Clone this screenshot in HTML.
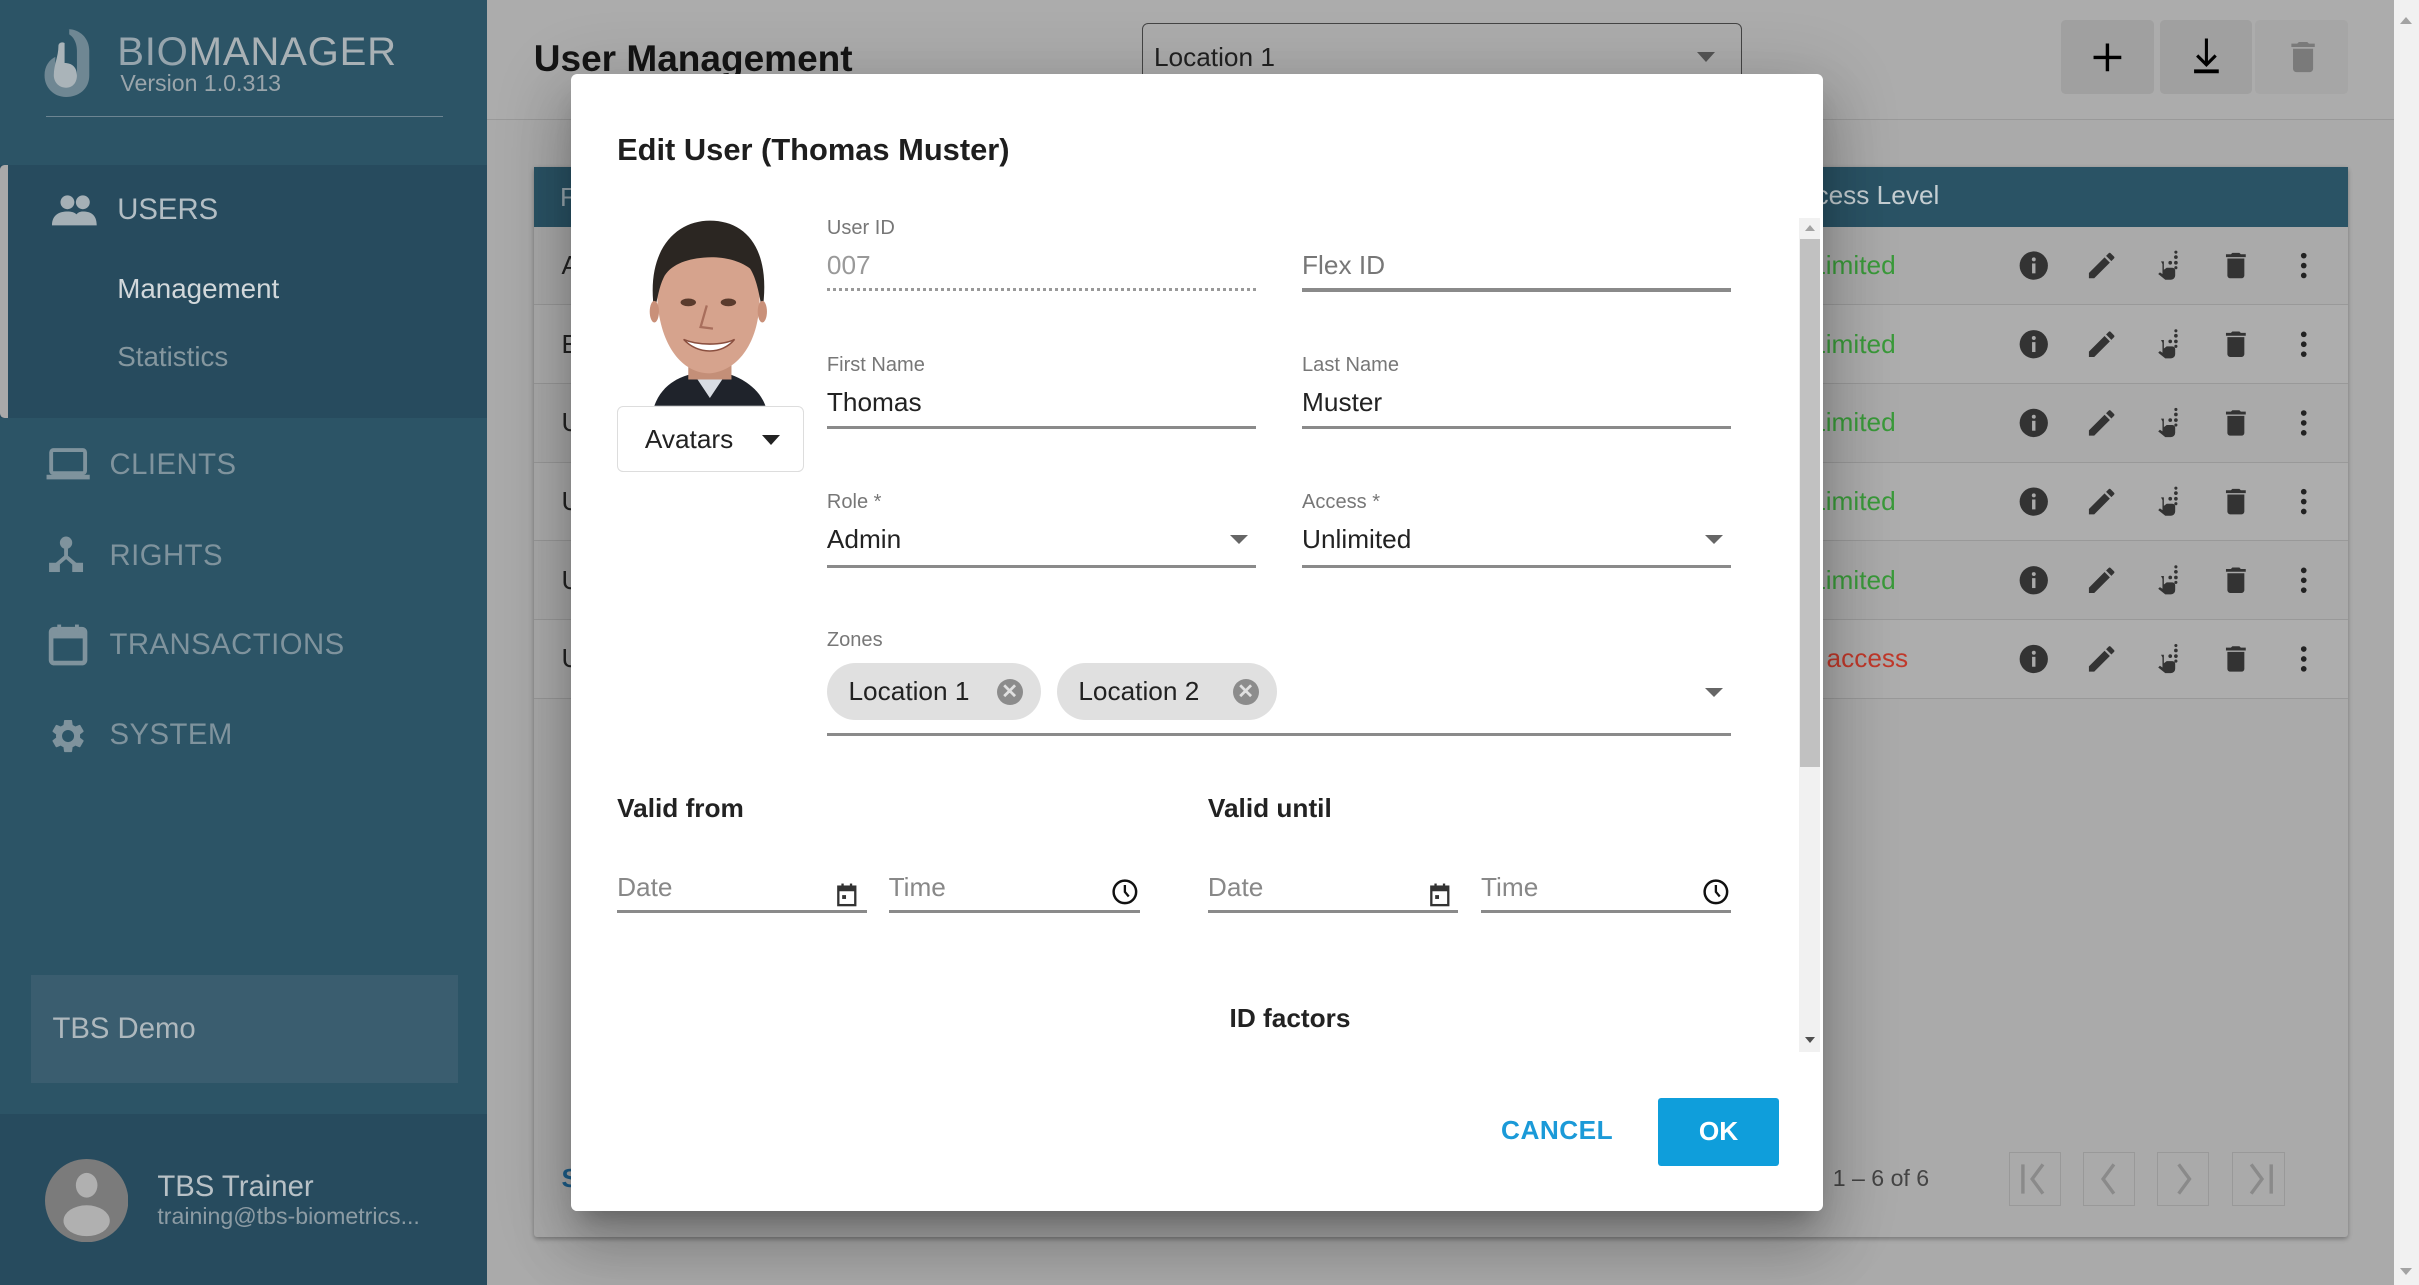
<!DOCTYPE html>
<html><head><meta charset="utf-8">
<style>
*{margin:0;padding:0;box-sizing:border-box}
html,body{width:2419px;height:1285px;overflow:hidden;background:#aaa}
#r{zoom:1.5427;width:1568px;height:833px;position:relative;font-family:"Liberation Sans",sans-serif;overflow:hidden;background:#aaaaaa}
.a{position:absolute;white-space:nowrap}
.t{position:absolute;white-space:nowrap;height:24px;line-height:24px}
.side{left:0;top:0;width:316px;height:833px;background:#2c5466}
.nav{color:#7f939d;font-size:19px;letter-spacing:.3px}
.row{position:absolute;left:346px;width:1176px;height:51px;border-bottom:1px solid #999}
.lab{font-size:13px;color:#777}
.val{font-size:17px;color:#222}
.ln{position:absolute;height:2px;background:#8a8a8a}
.chip{position:absolute;top:430px;height:37px;border-radius:19px;background:#e0e0e0;font-size:17px;color:#222;line-height:37px;padding-left:14px}
.x{position:absolute;top:10px;width:17px;height:17px;border-radius:50%;background:#8c8c8c;color:#e0e0e0;font-size:13px;line-height:17px;text-align:center;font-weight:bold}
.pg{position:absolute;top:747px;width:34px;height:35px;border:1px solid #999}
</style></head><body><div id="r">
<svg width="0" height="0" style="position:absolute">
<defs>
<symbol id="info" viewBox="0 0 24 24"><circle cx="12" cy="12" r="10" fill="#333"/><rect x="10.8" y="10.5" width="2.4" height="7" fill="#aaa"/><circle cx="12" cy="7.6" r="1.4" fill="#aaa"/></symbol>
<symbol id="pen" viewBox="0 0 24 24"><path d="M3 17.25V21h3.75L17.81 9.94l-3.75-3.75L3 17.25zM20.71 7.04a1 1 0 000-1.41l-2.34-2.34a1 1 0 00-1.41 0l-1.83 1.83 3.75 3.75 1.83-1.830z" fill="#333"/></symbol>
<symbol id="hand" viewBox="0 0 24 24"><path d="M7 9h2v6l2-1.5h4a2 2 0 012 2V19a3 3 0 01-3 3H10l-5-4 1.2-1.2L8 18V11z" fill="#333" transform="translate(-1 0)"/><circle cx="12.5" cy="10" r="1.3" fill="#333"/><circle cx="16.5" cy="10" r="1.3" fill="#333"/><circle cx="16.5" cy="6" r="1.3" fill="#333"/><circle cx="16.5" cy="2.5" r="1.1" fill="#333"/><circle cx="16.5" cy="13.5" r="1.1" fill="#333"/></symbol>
<symbol id="trash" viewBox="0 0 24 24"><path d="M6 19a2 2 0 002 2h8a2 2 0 002-2V7H6v12zM19 4h-3.5l-1-1h-5l-1 1H5v2h14V4z" fill="#333"/></symbol>
<symbol id="dots" viewBox="0 0 24 24"><circle cx="12" cy="5" r="2" fill="#222"/><circle cx="12" cy="12" r="2" fill="#222"/><circle cx="12" cy="19" r="2" fill="#222"/></symbol>
</defs></svg>

<!-- SIDEBAR -->
<div class="a side"></div>
<svg class="a" style="left:28px;top:17px" width="32" height="48" viewBox="0 0 32 48">
<path d="M16 2 C24 2 30 8 30 16 V32 C30 41 23 46 15 46 C7 46 1 40 1 32 C1 26 4 22 8 20 V30 C8 35 11 38 15 38 C19 38 22 35 22 30 V16 C22 10 19 6 16 5 Z" fill="#6f8793"/>
<path d="M10 13 C10 11 12 10 14 11 V24 C19 24 22 27 22 32 C22 37 19 40 15 40 C10 40 7 36 7 32 C7 25 10 20 10 13Z" fill="#aab4b9"/>
<path d="M16 2 V24" stroke="#2c5466" stroke-width="2"/>
</svg>
<div class="t" style="left:76px;top:19px;font-size:26px;height:30px;line-height:30px;letter-spacing:.5px"><span style="color:#96a5ad">BIO</span><span style="color:#a9b1b5">MANAGER</span></div>
<div class="t" style="left:78px;top:44px;font-size:15px;color:#9aa5ab;height:20px;line-height:20px">Version 1.0.313</div>
<div class="a" style="left:30px;top:75px;width:257px;height:1px;background:#6d8592"></div>
<div class="a" style="left:0;top:107px;width:316px;height:164px;background:#274b5e"></div>
<div class="a" style="left:0;top:107px;width:5px;height:164px;background:#a9a9a9;border-radius:3px 0 0 3px"></div>
<svg class="a" style="left:34px;top:125px" width="30" height="22" viewBox="0 0 30 22"><circle cx="10" cy="6" r="4.5" fill="#a5b0b6"/><circle cx="20" cy="6" r="4.5" fill="#a5b0b6"/><path d="M0 21 C0 14 5 12 10 12 C15 12 18 14 18 21Z M14 21 C14 14 17 12 20 12 C25 12 29 14 29 21Z" fill="#a5b0b6"/></svg>
<div class="t" style="left:76px;top:124px;font-size:19px;color:#b3bec4">USERS</div>
<div class="t" style="left:76px;top:175px;font-size:18px;color:#d2d8db">Management</div>
<div class="t" style="left:76px;top:219px;font-size:18px;color:#85979f">Statistics</div>
<svg class="a" style="left:29px;top:290px" width="30" height="22" viewBox="0 0 30 22"><rect x="4" y="2" width="22" height="15" rx="1.5" fill="none" stroke="#7f939d" stroke-width="2.5"/><rect x="1" y="18" width="28" height="3" fill="#7f939d"/></svg>
<div class="t nav" style="left:71px;top:289px">CLIENTS</div>
<svg class="a" style="left:30px;top:347px" width="26" height="26" viewBox="0 0 26 26"><circle cx="13" cy="5" r="4" fill="#7f939d"/><path d="M13 8 V14 L6 20 M13 14 L20 20" stroke="#7f939d" stroke-width="2.5" fill="none"/><rect x="2" y="18" width="7" height="6" fill="#7f939d"/><rect x="17" y="18" width="7" height="6" fill="#7f939d"/></svg>
<div class="t nav" style="left:71px;top:348px">RIGHTS</div>
<svg class="a" style="left:31px;top:404px" width="26" height="28" viewBox="0 0 26 28"><rect x="2" y="4" width="22" height="22" rx="2" fill="none" stroke="#7f939d" stroke-width="3"/><rect x="2" y="4" width="22" height="6" fill="#7f939d"/><rect x="6" y="1" width="2.5" height="5" fill="#7f939d"/><rect x="17.5" y="1" width="2.5" height="5" fill="#7f939d"/></svg>
<div class="t nav" style="left:71px;top:406px">TRANSACTIONS</div>
<svg class="a" style="left:31px;top:464px" width="26" height="26" viewBox="0 0 24 24"><path d="M19.14 12.94c.04-.3.06-.61.06-.94s-.02-.64-.07-.94l2.030-1.58a.49.49 0 00.12-.61l-1.92-3.32a.49.49 0 00-.59-.22l-2.39.96c-.5-.38-1.03-.7-1.62-.94l-.36-2.54a.48.48 0 00-.48-.41h-3.84c-.24 0-.43.17-.47.41l-.36 2.54c-.59.24-1.130.57-1.62.94l-2.39-.96a.48.48 0 00-.59.22L2.74 8.87a.47.47 0 00.12.61l2.03 1.58c-.05.3-.09.63-.09.94s.02.64.07.94l-2.03 1.58a.49.49 0 00-.12.61l1.92 3.32c.12.22.37.29.59.22l2.39-.96c.5.38 1.03.7 1.62.94l.36 2.54c.05.24.24.41.48.41h3.84c.24 0 .44-.17.47-.41l.36-2.54c.59-.24 1.13-.56 1.62-.94l2.39.96c.22.08.47 0 .59-.22l1.92-3.32a.47.47 0 00-.12-.61l-2.01-1.58zM12 15.6A3.6 3.6 0 1112 8.4a3.6 3.6 0 010 7.2z" fill="#7f939d"/></svg>
<div class="t nav" style="left:71px;top:464px">SYSTEM</div>
<div class="a" style="left:20px;top:632px;width:277px;height:70px;background:#3a5d6f"></div>
<div class="t" style="left:34px;top:655px;font-size:19px;color:#aeb8bd">TBS Demo</div>
<div class="a" style="left:0;top:722px;width:316px;height:111px;background:#274b5e"></div>
<svg class="a" style="left:29px;top:751px" width="54" height="54" viewBox="0 0 54 54"><circle cx="27" cy="27" r="27" fill="#7b7b7b"/><ellipse cx="27" cy="17" rx="7" ry="8" fill="#b0b0b0"/><ellipse cx="27" cy="40" rx="15" ry="10" fill="#b0b0b0"/></svg>
<div class="t" style="left:102px;top:757px;font-size:19px;color:#b8c1c6">TBS Trainer</div>
<div class="t" style="left:102px;top:778px;font-size:15px;color:#8d9ca4;height:22px;line-height:22px">training@tbs-biometrics...</div>

<!-- MAIN -->
<div class="a" style="left:316px;top:0;width:1236px;height:78px;background:#acacac;border-bottom:1px solid #999"></div>
<div class="t" style="left:346px;top:23px;font-size:24px;font-weight:bold;color:#151515;height:30px;line-height:30px">User Management</div>
<div class="a" style="left:740px;top:15px;width:389px;height:50px;border:1px solid #444;border-radius:4px"></div>
<div class="t" style="left:748px;top:25px;font-size:17px;color:#222">Location 1</div>
<div class="a" style="left:1100px;top:34px;width:0;height:0;border-left:6px solid transparent;border-right:6px solid transparent;border-top:7px solid #555"></div>
<div class="a" style="left:1336px;top:13px;width:60px;height:48px;background:#a0a0a0;border-radius:3px"></div>
<div class="a" style="left:1400px;top:13px;width:60px;height:48px;background:#a0a0a0;border-radius:3px"></div>
<div class="a" style="left:1462px;top:13px;width:60px;height:48px;background:#a6a6a6;border-radius:3px"></div>
<svg class="a" style="left:1356px;top:27px" width="20" height="20" viewBox="0 0 20 20"><path d="M10 1V19M1 10H19" stroke="#000" stroke-width="2.2"/></svg>
<svg class="a" style="left:1420px;top:24px" width="20" height="26" viewBox="0 0 20 26"><path d="M10 1V17M4 12L10 18L16 12" stroke="#000" stroke-width="2" fill="none"/><rect x="2" y="21" width="16" height="2.5" fill="#000"/></svg>
<svg class="a" style="left:1480px;top:24px" width="26" height="26" viewBox="0 0 24 24"><path d="M6 19a2 2 0 002 2h8a2 2 0 002-2V7H6v12zM19 4h-3.5l-1-1h-5l-1 1H5v2h14V4z" fill="#7a7a7a"/></svg>

<div class="a" style="left:346px;top:108px;width:1176px;height:694px;background:#aaaaaa;box-shadow:0 1px 3px rgba(0,0,0,.3);border-radius:2px"></div>
<div class="a" style="left:346px;top:108px;width:1176px;height:39px;background:#2a5365"></div>
<div class="t" style="left:363px;top:116px;font-size:17px;color:#9aa8b0">F</div>
<div class="t" style="left:1157px;top:115px;font-size:17px;color:#c5ced2">Access Level</div>

<div class="row" style="top:147px"></div><div class="row" style="top:198px;background:#adadad"></div><div class="row" style="top:249px"></div><div class="row" style="top:300px;background:#adadad"></div><div class="row" style="top:351px"></div><div class="row" style="top:402px;background:#adadad"></div>
<div class="t" style="left:364px;top:160px;font-size:17px;color:#222">A</div>
<div class="t" style="left:364px;top:211px;font-size:17px;color:#222">E</div>
<div class="t" style="left:364px;top:262px;font-size:17px;color:#222">U</div>
<div class="t" style="left:364px;top:313px;font-size:17px;color:#222">U</div>
<div class="t" style="left:364px;top:364px;font-size:17px;color:#222">U</div>
<div class="t" style="left:364px;top:415px;font-size:17px;color:#222">U</div>
<div class="t" style="left:1174px;top:160px;font-size:17px;color:#3a9a3a">Limited</div>
<div class="t" style="left:1174px;top:211px;font-size:17px;color:#3a9a3a">Limited</div>
<div class="t" style="left:1174px;top:262px;font-size:17px;color:#3a9a3a">Limited</div>
<div class="t" style="left:1174px;top:313px;font-size:17px;color:#3a9a3a">Limited</div>
<div class="t" style="left:1174px;top:364px;font-size:17px;color:#3a9a3a">Limited</div>
<div class="t" style="left:1184px;top:415px;font-size:17px;color:#c0392b">access</div>

<svg class="a" style="left:1300px;top:147px" width="210" height="306">
<g><use href="#info" x="7" y="14" width="22" height="22"/><use href="#pen" x="51" y="14" width="22" height="22"/><use href="#hand" x="95" y="14" width="22" height="22"/><use href="#trash" x="138" y="14" width="22" height="22"/><use href="#dots" x="182" y="14" width="22" height="22"/></g>
<g transform="translate(0,51)"><use href="#info" x="7" y="14" width="22" height="22"/><use href="#pen" x="51" y="14" width="22" height="22"/><use href="#hand" x="95" y="14" width="22" height="22"/><use href="#trash" x="138" y="14" width="22" height="22"/><use href="#dots" x="182" y="14" width="22" height="22"/></g>
<g transform="translate(0,102)"><use href="#info" x="7" y="14" width="22" height="22"/><use href="#pen" x="51" y="14" width="22" height="22"/><use href="#hand" x="95" y="14" width="22" height="22"/><use href="#trash" x="138" y="14" width="22" height="22"/><use href="#dots" x="182" y="14" width="22" height="22"/></g>
<g transform="translate(0,153)"><use href="#info" x="7" y="14" width="22" height="22"/><use href="#pen" x="51" y="14" width="22" height="22"/><use href="#hand" x="95" y="14" width="22" height="22"/><use href="#trash" x="138" y="14" width="22" height="22"/><use href="#dots" x="182" y="14" width="22" height="22"/></g>
<g transform="translate(0,204)"><use href="#info" x="7" y="14" width="22" height="22"/><use href="#pen" x="51" y="14" width="22" height="22"/><use href="#hand" x="95" y="14" width="22" height="22"/><use href="#trash" x="138" y="14" width="22" height="22"/><use href="#dots" x="182" y="14" width="22" height="22"/></g>
<g transform="translate(0,255)"><use href="#info" x="7" y="14" width="22" height="22"/><use href="#pen" x="51" y="14" width="22" height="22"/><use href="#hand" x="95" y="14" width="22" height="22"/><use href="#trash" x="138" y="14" width="22" height="22"/><use href="#dots" x="182" y="14" width="22" height="22"/></g>
</svg>

<div class="t" style="left:364px;top:752px;font-size:17px;color:#1c5f8c;font-weight:bold">S</div>
<div class="t" style="left:1188px;top:752px;font-size:15px;color:#444">1 – 6 of 6</div>
<div class="pg" style="left:1302px"></div><div class="pg" style="left:1350px"></div><div class="pg" style="left:1398px"></div><div class="pg" style="left:1447px"></div>
<svg class="a" style="left:1302px;top:747px" width="180" height="35" viewBox="0 0 180 35">
<g stroke="#8a8a8a" stroke-width="2.2" fill="none"><path d="M9 8V27M22 8L15 17.5L22 27"/><path d="M68 8L61 17.5L68 27"/><path d="M110 8L117 17.5L110 27"/><path d="M157 8L164 17.5L157 27M170 8V27"/></g></svg>

<!-- page scrollbar -->
<div class="a" style="left:1552px;top:0;width:16px;height:833px;background:#f1f1f1"></div>
<div class="a" style="left:1556px;top:11px;border-left:4px solid transparent;border-right:4px solid transparent;border-bottom:5px solid #a3a3a3"></div>
<div class="a" style="left:1556px;top:822px;border-left:4px solid transparent;border-right:4px solid transparent;border-top:5px solid #a3a3a3"></div>

<!-- DIALOG -->
<div class="a" style="left:370px;top:48px;width:812px;height:737px;background:#fff;border-radius:4px;box-shadow:0 11px 15px -7px rgba(0,0,0,.25),0 24px 38px 3px rgba(0,0,0,.16),0 9px 46px 8px rgba(0,0,0,.14)"></div>
<div class="t" style="left:400px;top:85px;font-size:20px;font-weight:bold;color:#1e1e1e">Edit User (Thomas Muster)</div>

<svg class="a" style="left:416px;top:140px" width="86" height="123" viewBox="0 0 86 123">
<path d="M8 123 C12 112 20 106 30 103 L58 103 C66 106 76 112 80 123Z" fill="#1f232b"/>
<path d="M34 103 L44 118 L54 103Z" fill="#d9dde3"/>
<path d="M30 90 L30 106 L58 106 L58 90Z" fill="#c48f78"/>
<path d="M10 55 C10 35 22 18 44 18 C66 18 78 35 76 58 C75 80 64 100 44 102 C26 102 12 84 10 55Z" fill="#d6a38d"/>
<path d="M8 62 C2 22 22 3 44 3 C68 3 84 22 78 62 C76 50 74 40 70 34 C62 28 50 26 40 27 C28 28 18 32 14 40 C11 46 10 54 8 62Z" fill="#2b2622"/>
<ellipse cx="8" cy="62" rx="3" ry="7" fill="#c99079"/><ellipse cx="78" cy="62" rx="3" ry="7" fill="#c99079"/>
<ellipse cx="30" cy="56" rx="5" ry="2.5" fill="#5a3b2d"/><ellipse cx="56" cy="56" rx="5" ry="2.5" fill="#5a3b2d"/>
<path d="M42 58 L38 72 L46 73" stroke="#a86e5c" stroke-width="1.5" fill="none"/>
<path d="M27 80 C36 90 52 90 60 80 C52 84 36 84 27 80Z" fill="#fff" stroke="#8a4f3f"/>
</svg>
<div class="a" style="left:400px;top:263px;width:121px;height:43px;border:1px solid #ddd;border-radius:4px;background:#fff"></div>
<div class="t" style="left:418px;top:273px;font-size:17px;color:#222">Avatars</div>
<div class="a" style="left:494px;top:282px;border-left:6px solid transparent;border-right:6px solid transparent;border-top:7px solid #222"></div>

<div class="t lab" style="left:536px;top:136px">User ID</div>
<div class="t" style="left:536px;top:160px;font-size:17px;color:#999">007</div>
<div class="a" style="left:536px;top:187px;width:278px;border-top:2px dotted #999"></div>
<div class="t" style="left:844px;top:160px;font-size:17px;color:#777">Flex ID</div>
<div class="ln" style="left:844px;top:187px;width:278px"></div>

<div class="t lab" style="left:536px;top:225px">First Name</div>
<div class="t val" style="left:536px;top:249px">Thomas</div>
<div class="ln" style="left:536px;top:276px;width:278px"></div>
<div class="t lab" style="left:844px;top:225px">Last Name</div>
<div class="t val" style="left:844px;top:249px">Muster</div>
<div class="ln" style="left:844px;top:276px;width:278px"></div>

<div class="t lab" style="left:536px;top:314px">Role *</div>
<div class="t val" style="left:536px;top:338px">Admin</div>
<div class="a" style="left:797px;top:347px;border-left:6px solid transparent;border-right:6px solid transparent;border-top:6px solid #666"></div>
<div class="ln" style="left:536px;top:366px;width:278px"></div>
<div class="t lab" style="left:844px;top:314px">Access *</div>
<div class="t val" style="left:844px;top:338px">Unlimited</div>
<div class="a" style="left:1105px;top:347px;border-left:6px solid transparent;border-right:6px solid transparent;border-top:6px solid #666"></div>
<div class="ln" style="left:844px;top:366px;width:278px"></div>

<div class="t lab" style="left:536px;top:403px">Zones</div>
<div class="chip" style="left:536px;width:139px">Location 1<div class="x" style="left:110px">✕</div></div>
<div class="chip" style="left:685px;width:143px">Location 2<div class="x" style="left:114px">✕</div></div>
<div class="a" style="left:1105px;top:446px;border-left:6px solid transparent;border-right:6px solid transparent;border-top:6px solid #666"></div>
<div class="ln" style="left:536px;top:475px;width:586px"></div>

<div class="t" style="left:400px;top:512px;font-size:17px;font-weight:bold;color:#222">Valid from</div>
<div class="t" style="left:783px;top:512px;font-size:17px;font-weight:bold;color:#222">Valid until</div>

<div class="t" style="left:400px;top:563px;font-size:17px;color:#888">Date</div>
<div class="ln" style="left:400px;top:590px;width:162px"></div>
<div class="t" style="left:576px;top:563px;font-size:17px;color:#888">Time</div>
<div class="ln" style="left:576px;top:590px;width:163px"></div>
<div class="t" style="left:783px;top:563px;font-size:17px;color:#888">Date</div>
<div class="ln" style="left:783px;top:590px;width:162px"></div>
<div class="t" style="left:960px;top:563px;font-size:17px;color:#888">Time</div>
<div class="ln" style="left:960px;top:590px;width:162px"></div>
<svg class="a" style="left:542px;top:572px" width="14" height="16" viewBox="0 0 14 16"><rect x="1.5" y="3" width="11" height="12" fill="none" stroke="#333" stroke-width="1.5"/><rect x="1.5" y="3" width="11" height="3" fill="#333"/><rect x="3.5" y="1" width="1.5" height="3" fill="#333"/><rect x="9" y="1" width="1.5" height="3" fill="#333"/><rect x="4" y="8.5" width="2.5" height="2.5" fill="#333"/></svg>
<svg class="a" style="left:926px;top:572px" width="14" height="16" viewBox="0 0 14 16"><rect x="1.5" y="3" width="11" height="12" fill="none" stroke="#333" stroke-width="1.5"/><rect x="1.5" y="3" width="11" height="3" fill="#333"/><rect x="3.5" y="1" width="1.5" height="3" fill="#333"/><rect x="9" y="1" width="1.5" height="3" fill="#333"/><rect x="4" y="8.5" width="2.5" height="2.5" fill="#333"/></svg>
<svg class="a" style="left:720px;top:569px" width="18" height="18" viewBox="0 0 18 18"><circle cx="9" cy="9" r="7.3" fill="none" stroke="#111" stroke-width="1.6"/><path d="M9 4.5V9L11.5 12" stroke="#111" stroke-width="1.5" fill="none"/></svg>
<svg class="a" style="left:1103px;top:569px" width="18" height="18" viewBox="0 0 18 18"><circle cx="9" cy="9" r="7.3" fill="none" stroke="#111" stroke-width="1.6"/><path d="M9 4.5V9L11.5 12" stroke="#111" stroke-width="1.5" fill="none"/></svg>

<div class="t" style="left:797px;top:648px;font-size:17px;font-weight:bold;color:#222">ID factors</div>

<!-- dialog scrollbar -->
<div class="a" style="left:1166px;top:141px;width:14px;height:541px;background:#f1f1f1"></div>
<div class="a" style="left:1167px;top:155px;width:13px;height:342px;background:#c1c1c1"></div>
<div class="a" style="left:1170px;top:146px;border-left:3.5px solid transparent;border-right:3.5px solid transparent;border-bottom:4px solid #a3a3a3"></div>
<div class="a" style="left:1170px;top:672px;border-left:3.5px solid transparent;border-right:3.5px solid transparent;border-top:4px solid #505050"></div>

<div class="t" style="left:973px;top:721px;font-size:17px;font-weight:bold;color:#1b9ad8;letter-spacing:.3px">CANCEL</div>
<div class="a" style="left:1075px;top:712px;width:78px;height:44px;background:#0f9edb;border-radius:2px;color:#fff;font-weight:bold;font-size:17px;text-align:center;line-height:44px">OK</div>
</div></body></html>
